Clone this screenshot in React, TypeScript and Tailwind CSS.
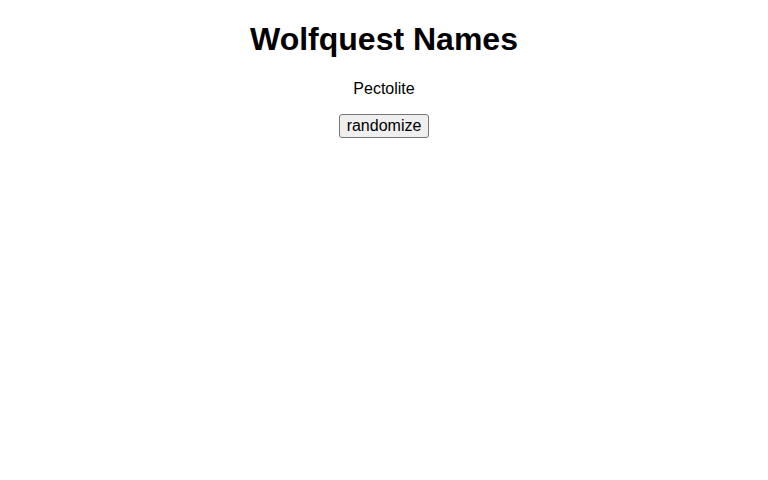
import { useState } from "react";

const NAMES = ["Pectolite", "Aspen", "Birch", "Cinder", "Ember", "Flint", "Quartz", "Sable"];

export default function App() {
  const [name, setName] = useState("Pectolite");

  const randomize = () => {
    setName(NAMES[Math.floor(Math.random() * NAMES.length)]);
  };

  return (
    <div className="min-h-screen bg-white text-black text-center font-['Liberation_Sans',Arial,sans-serif]">
      <h1 className="pt-[21px] mb-[22px] text-[32px] leading-[37px] font-bold">Wolfquest Names</h1>
      <p className="text-base leading-[18px] mb-4">{name}</p>
      <button
        onClick={randomize}
        className="h-6 px-[7px] text-base leading-[18px] bg-[#efefef] border border-[#767676] rounded-[3px] text-black"
      >
        randomize
      </button>
    </div>
  );
}
